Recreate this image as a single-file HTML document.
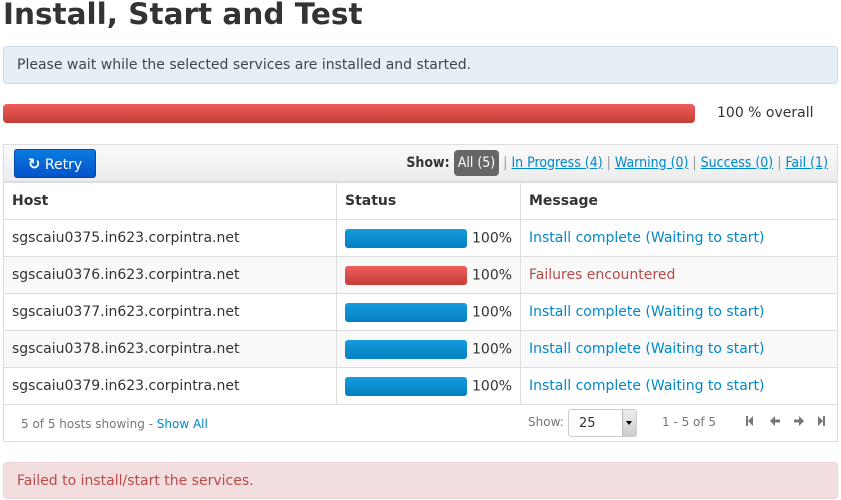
<!DOCTYPE html>
<html><head><style>
body{margin:0;background:#fff;font-family:"DejaVu Sans","Liberation Sans",sans-serif;color:#333;width:841px;height:499px;overflow:hidden;position:relative}
.a{position:absolute}
h1{position:absolute;left:3px;top:-3px;margin:0;font-size:29.5px;font-weight:bold;color:#333}
.info{left:3px;top:46px;width:833px;height:36px;background:#e5eff5;border:1px solid #c9dbe5;border-radius:4px;font-size:14px;color:#444;line-height:37px;text-indent:13px}
.pb{left:3px;top:104px;width:692px;height:19px;border-radius:4px;background:linear-gradient(#ee5f5b,#c43c35)}
.panel{left:3px;top:144px;width:833px;height:296px;border:1px solid #ddd}
.tool{left:0;top:0;width:833px;height:36px;background:linear-gradient(#fafafa,#ececec);border-bottom:1px solid #ddd}
.btn{left:10px;top:4px;width:82px;height:29px;border-radius:3px;background:linear-gradient(#0a7be0,#0453c8);border:1px solid #0448a8;color:#fff;font-size:14px;line-height:28px;text-align:center;box-sizing:border-box}
.show{right:9px;top:6px;font-size:14px;line-height:25px;color:#999;font-family:"DejaVu Sans Condensed","DejaVu Sans",sans-serif;white-space:nowrap}
.show a{color:#0088cc;text-decoration:underline}
.show b{color:#333}
.all{background:#666;color:#fff;padding:5px 4px;border-radius:4px}
table{position:absolute;left:-1px;top:37px;width:835px;border-collapse:collapse;font-size:14px;table-layout:fixed}
td,th{border:1px solid #ddd;height:36px;padding:0 8px;text-align:left;white-space:nowrap}
th{font-weight:bold}
tr:nth-child(odd) td{background:#f9f9f9}
tr.h th{background:#fff}
.bar{display:inline-block;width:122px;height:19px;border-radius:3px;vertical-align:middle;margin-right:5px;background:linear-gradient(#149bdf,#0480be)}
.bar.r{background:linear-gradient(#ee5f5b,#c43c35)}
.m{color:#0088cc}.f{color:#b94a48}
.foot{left:0;top:259px;width:833px;height:37px;font-size:12px;color:#777}
.sel{left:564px;top:5px;width:67px;height:26px;border:1px solid #ccc;border-radius:3px;background:#fff;font-size:13px;color:#333}
.err{left:3px;top:462px;width:833px;height:35px;background:#f2dede;border:1px solid #eed3d7;border-radius:4px;color:#b94a48;font-size:14px;line-height:37px;text-indent:13px}
</style></head><body>
<h1>Install, Start and Test</h1>
<div class="a info">Please wait while the selected services are installed and started.</div>
<div class="a pb"></div>
<div class="a" style="left:717px;top:105px;font-size:14px">100 % overall</div>
<div class="a panel">
<div class="a tool">
<div class="a btn"><b style="font-size:15px">&#x21bb;</b> Retry</div>
<div class="a show"><b>Show:</b> <span class="all">All (5)</span> | <a>In Progress (4)</a> | <a>Warning (0)</a> | <a>Success (0)</a> | <a>Fail (1)</a></div>
</div>
<table>
<colgroup><col style="width:333px"><col style="width:184px"><col></colgroup>
<tr class="h"><th>Host</th><th>Status</th><th>Message</th></tr>
<tr><td>sgscaiu0375.in623.corpintra.net</td><td><span class="bar"></span>100%</td><td class="m">Install complete (Waiting to start)</td></tr>
<tr><td>sgscaiu0376.in623.corpintra.net</td><td><span class="bar r"></span>100%</td><td class="f">Failures encountered</td></tr>
<tr><td>sgscaiu0377.in623.corpintra.net</td><td><span class="bar"></span>100%</td><td class="m">Install complete (Waiting to start)</td></tr>
<tr><td>sgscaiu0378.in623.corpintra.net</td><td><span class="bar"></span>100%</td><td class="m">Install complete (Waiting to start)</td></tr>
<tr><td>sgscaiu0379.in623.corpintra.net</td><td><span class="bar"></span>100%</td><td class="m">Install complete (Waiting to start)</td></tr>
</table>
<div class="a foot">
<div class="a" style="left:17px;top:13px">5 of 5 hosts showing - <span style="color:#0088cc">Show All</span></div>
<div class="a" style="left:524px;top:11px">Show:</div>
<div class="a sel"><span class="a" style="left:10px;top:6px">25</span><span class="a" style="right:0;top:0;width:13px;height:26px;background:linear-gradient(#eee,#ccc);border-left:1px solid #bbb"><span class="a" style="left:3px;top:11px;border:3px solid transparent;border-top:4px solid #000"></span></span></div>
<div class="a" style="left:658px;top:11px">1 - 5 of 5</div>
<svg class="a" style="left:738px;top:11px" width="85" height="12" viewBox="0 0 85 12" fill="#777">
<rect x="4" y="1" width="2" height="10"/><path d="M6 6 L11 1 V11 Z"/>
<path d="M28 6 L33 1 V4.5 H38 V7.5 H33 V11 Z"/>
<path d="M62 6 L57 1 V4.5 H52 V7.5 H57 V11 Z"/>
<path d="M81 6 L76 1 V11 Z"/><rect x="81" y="1" width="2" height="10"/>
</svg>
</div>
</div>
<div class="a err">Failed to install/start the services.</div>
</body></html>
